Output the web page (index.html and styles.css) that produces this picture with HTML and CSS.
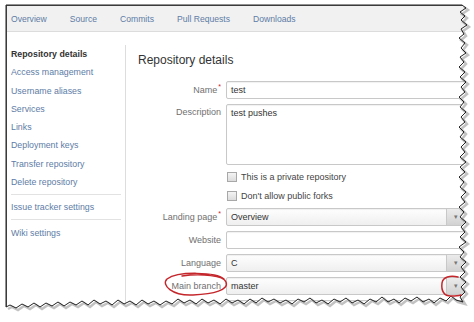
FILE: index.html
```html
<!DOCTYPE html>
<html>
<head>
<meta charset="utf-8">
<link rel="stylesheet" href="styles.css">
</head>
<body>
<div class="frame">
  <div class="nav">
    <span class="tab">Overview</span>
    <span class="tab">Source</span>
    <span class="tab">Commits</span>
    <span class="tab">Pull Requests</span>
    <span class="tab">Downloads</span>
  </div>
  <div class="main">
    <div class="sidebar">
      <div class="item active">Repository details</div>
      <div class="item">Access management</div>
      <div class="item">Username aliases</div>
      <div class="item">Services</div>
      <div class="item">Links</div>
      <div class="item">Deployment keys</div>
      <div class="item">Transfer repository</div>
      <div class="item">Delete repository</div>
      <div class="sep"></div>
      <div class="item">Issue tracker settings</div>
      <div class="sep sep2"></div>
      <div class="item">Wiki settings</div>
    </div>
    <div class="content">
      <h1 class="title">Repository details</h1>
      <div class="form">
        <div class="label">Name<span class="req">*</span></div>
        <div class="input">test</div>

        <div class="label top">Description</div>
        <div class="input area">test pushes</div>

        <div></div>
        <div class="check"><span class="box"></span>This is a private repository</div>

        <div></div>
        <div class="check"><span class="box"></span>Don't allow public forks</div>

        <div class="label">Landing page<span class="req">*</span></div>
        <div class="input select">Overview<span class="arrow">▾</span></div>

        <div class="label">Website</div>
        <div class="input"></div>

        <div class="label">Language</div>
        <div class="input select">C<span class="arrow">▾</span></div>

        <div class="label">Main branch</div>
        <div class="input select">master<span class="arrow">▾</span></div>

        <div class="label">Google Analytics</div>
        <div class="input"></div>
      </div>
    </div>
  </div>
</div>
<svg class="torn" width="474" height="322" viewBox="0 0 474 322">
  <path fill="#fff" fill-rule="evenodd" d="M0 0H474V322H0Z M6 5 L462 5 L466 8 L460 12 L465 16 L461 20 L467 25 L461 29 L464 34 L459 38 L465 43 L461 48 L466 53 L460 57 L464 62 L459 67 L465 72 L460 77 L466 82 L461 87 L465 92 L459 97 L464 102 L460 107 L466 112 L461 117 L465 122 L459 127 L464 132 L460 137 L466 142 L461 147 L465 152 L460 157 L466 162 L460 167 L465 172 L459 177 L464 182 L460 187 L466 192 L461 197 L465 202 L459 207 L464 212 L460 217 L466 222 L461 227 L465 232 L460 237 L466 242 L459 247 L464 252 L460 257 L466 262 L461 267 L465 272 L460 277 L466 282 L461 287 L465 292 L460 297 L463 302 L456 300 L451 296 L446 301 L440 298 L434 303 L429 299 L423 302 L417 297 L411 301 L405 298 L399 303 L394 299 L388 302 L382 297 L376 302 L370 299 L364 304 L358 300 L352 303 L346 298 L340 302 L334 299 L328 304 L322 300 L316 303 L310 298 L304 302 L298 299 L292 304 L286 300 L280 303 L274 299 L268 302 L262 298 L256 303 L250 299 L244 304 L238 300 L232 303 L226 299 L220 304 L214 300 L208 303 L202 299 L196 304 L190 300 L184 303 L178 299 L172 304 L166 301 L160 305 L154 301 L148 304 L142 300 L136 305 L130 301 L124 304 L118 300 L112 305 L106 301 L100 304 L94 300 L88 305 L82 301 L76 305 L70 302 L64 306 L58 302 L52 306 L46 303 L40 307 L34 303 L28 307 L22 304 L16 308 L10 305 L6 307 Z"/>
  <g transform="translate(2 2)" opacity="0.45">
    <polyline fill="none" stroke="#777" stroke-width="2.5" points="462,5 466,8 460,12 465,16 461,20 467,25 461,29 464,34 459,38 465,43 461,48 466,53 460,57 464,62 459,67 465,72 460,77 466,82 461,87 465,92 459,97 464,102 460,107 466,112 461,117 465,122 459,127 464,132 460,137 466,142 461,147 465,152 460,157 466,162 460,167 465,172 459,177 464,182 460,187 466,192 461,197 465,202 459,207 464,212 460,217 466,222 461,227 465,232 460,237 466,242 459,247 464,252 460,257 466,262 461,267 465,272 460,277 466,282 461,287 465,292 460,297 463,302 456,300 451,296 446,301 440,298 434,303 429,299 423,302 417,297 411,301 405,298 399,303 394,299 388,302 382,297 376,302 370,299 364,304 358,300 352,303 346,298 340,302 334,299 328,304 322,300 316,303 310,298 304,302 298,299 292,304 286,300 280,303 274,299 268,302 262,298 256,303 250,299 244,304 238,300 232,303 226,299 220,304 214,300 208,303 202,299 196,304 190,300 184,303 178,299 172,304 166,301 160,305 154,301 148,304 142,300 136,305 130,301 124,304 118,300 112,305 106,301 100,304 94,300 88,305 82,301 76,305 70,302 64,306 58,302 52,306 46,303 40,307 34,303 28,307 22,304 16,308 10,305 6,307"/>
  </g>
  <polyline fill="none" stroke="#222" stroke-width="1" points="6,5 462,5 466,8 460,12 465,16 461,20 467,25 461,29 464,34 459,38 465,43 461,48 466,53 460,57 464,62 459,67 465,72 460,77 466,82 461,87 465,92 459,97 464,102 460,107 466,112 461,117 465,122 459,127 464,132 460,137 466,142 461,147 465,152 460,157 466,162 460,167 465,172 459,177 464,182 460,187 466,192 461,197 465,202 459,207 464,212 460,217 466,222 461,227 465,232 460,237 466,242 459,247 464,252 460,257 466,262 461,267 465,272 460,277 466,282 461,287 465,292 460,297 463,302 456,300 451,296 446,301 440,298 434,303 429,299 423,302 417,297 411,301 405,298 399,303 394,299 388,302 382,297 376,302 370,299 364,304 358,300 352,303 346,298 340,302 334,299 328,304 322,300 316,303 310,298 304,302 298,299 292,304 286,300 280,303 274,299 268,302 262,298 256,303 250,299 244,304 238,300 232,303 226,299 220,304 214,300 208,303 202,299 196,304 190,300 184,303 178,299 172,304 166,301 160,305 154,301 148,304 142,300 136,305 130,301 124,304 118,300 112,305 106,301 100,304 94,300 88,305 82,301 76,305 70,302 64,306 58,302 52,306 46,303 40,307 34,303 28,307 22,304 16,308 10,305 6,307 6,5"/>
  <path fill="none" stroke="#c4262b" stroke-width="1.5" stroke-linecap="round" d="M224 279 C 216 272, 178 271, 167 279 C 161 285, 172 296, 193 295 C 214 294, 229 290, 226 282 C 224 276, 202 273, 182 276"/>
  <path fill="none" stroke="#c4262b" stroke-width="1.5" stroke-linecap="round" d="M458 277 C 450 275, 443 277, 442 283 C 441 291, 444 296, 451 296 C 455 296, 458 296, 461 295"/>
</svg>
</body>
</html>
```
FILE: styles.css
```css
html, body {
  margin: 0;
  padding: 0;
  overflow: hidden;
  background: #fff;
  width: 474px;
  height: 322px;
}
body {
  position: relative;
  font-family: "Liberation Sans", Arial, sans-serif;
}
.frame {
  margin: 5px 0 0 6px;
  width: 470px;
  height: 320px;
  overflow: hidden;
  border-top: 1px solid #555;
  border-left: 1px solid #555;
  box-sizing: border-box;
}
.nav {
  height: 25px;
  background: #f1f1f1;
  border-bottom: 1px solid #dcdcdc;
  display: flex;
  align-items: center;
  gap: 23px;
  padding-left: 4px;
  font-size: 8.6px;
  color: #5d7ca6;
}
.main {
  display: flex;
}
.sidebar {
  width: 114px;
  padding-left: 4px;
  margin-top: 13px;
  height: 280px;
  border-right: 1px solid #ddd;
  font-size: 8.8px;
}
.item {
  height: 18.25px;
  line-height: 18.25px;
  color: #5d7ca6;
  white-space: nowrap;
}
.item.active {
  color: #333;
  font-weight: bold;
}
.sep {
  height: 1px;
  background: #e2e2e2;
  margin: 3px 4px 3px 0;
}
.sep2 {
  margin-bottom: 4px;
}
.content {
  padding-left: 12px;
  flex: 1;
}
.title {
  margin: 21px 0 0;
  font-size: 12px;
  font-weight: normal;
  line-height: 14px;
  color: #333;
}
.form {
  margin-top: 14px;
  display: grid;
  grid-template-columns: 83px 250px;
  column-gap: 5px;
  row-gap: 5px;
  font-size: 9px;
}
.label {
  color: #707070;
  text-align: right;
  line-height: 18px;
  white-space: nowrap;
}
.label.top {
  line-height: 16px;
}
.req {
  color: #d0232a;
  font-size: 7px;
  vertical-align: top;
  line-height: 12px;
  margin-left: 1px;
}
.input {
  position: relative;
  height: 18px;
  line-height: 16px;
  box-sizing: border-box;
  border: 1px solid #c8c8c8;
  border-radius: 2px;
  background: #fff;
  padding-left: 4px;
  color: #333;
  box-shadow: inset 0 1px 1px rgba(0,0,0,0.06);
}
.input.area {
  height: 61px;
  padding-top: 2px;
  line-height: 12px;
}
.input.select {
  background: linear-gradient(#fefefe, #efefef);
}
.arrow {
  position: absolute;
  left: 219px;
  top: 0;
  width: 17px;
  height: 16px;
  border-left: 1px solid #c8c8c8;
  background: linear-gradient(#ebebeb, #d2d2d2);
  color: #777;
  font-size: 7px;
  line-height: 16px;
  text-align: center;
}
.check {
  height: 14px;
  line-height: 14px;
  display: flex;
  align-items: center;
  color: #444;
  white-space: nowrap;
}
.box {
  width: 8px;
  height: 8px;
  border: 1px solid #a8a8a8;
  background: linear-gradient(#f4f4f4, #dcdcdc);
  margin: 0 4px 0 1px;
}
.torn {
  position: absolute;
  left: 0;
  top: 0;
  pointer-events: none;
}
```
